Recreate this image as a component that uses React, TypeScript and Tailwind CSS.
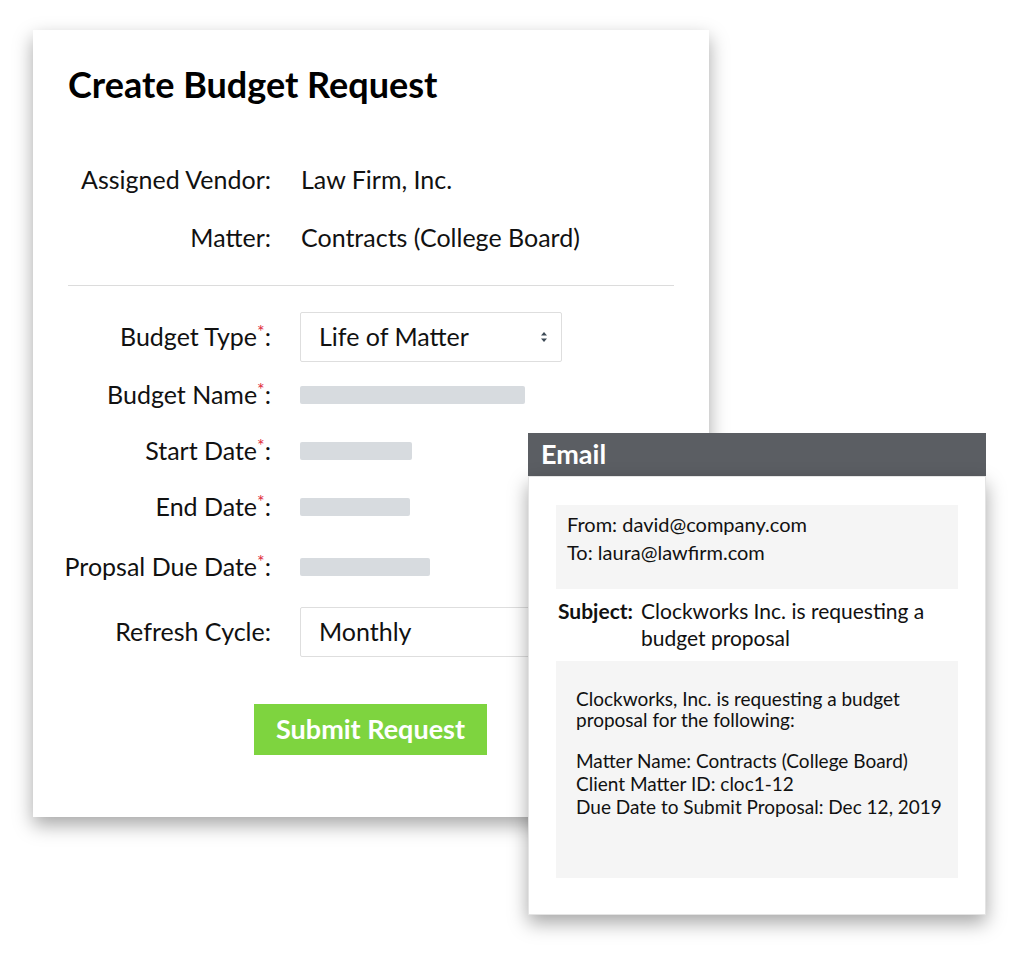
import React from "react";

const font = { fontFamily: "Lato, 'Open Sans', sans-serif" };

function Req() {
  return <span className="text-[#e0283a] text-[18px] relative -top-[8px]">*</span>;
}

function Label({ text, required }: { text: string; required?: boolean }) {
  return (
    <div className="w-[238px] shrink-0 text-right whitespace-nowrap text-[25px] text-[#111]">
      {text}
      {required && <Req />}:
    </div>
  );
}

function Chevrons() {
  return (
    <svg width="10" height="18" viewBox="0 0 10 18" className="shrink-0">
      <path d="M2 7.5 L5 4 L8 7.5 Z" fill="#3d4a56" />
      <path d="M2 10.5 L5 14 L8 10.5 Z" fill="#3d4a56" />
    </svg>
  );
}

function BudgetForm() {
  return (
    <div className="w-[676px] h-[787px] bg-white shadow-[0_8px_18px_rgba(0,0,0,0.35)] flex flex-col">
      <h1 className="pl-[35px] pt-[33px] text-[36px] leading-[43px] font-bold text-black">Create Budget Request</h1>

      <div className="mt-[45px] flex flex-col">
        <div className="h-[58px] flex items-center">
          <Label text="Assigned Vendor" />
          <div className="ml-[30px] text-[25px] text-[#111]">Law Firm, Inc.</div>
        </div>
        <div className="h-[58px] flex items-center">
          <Label text="Matter" />
          <div className="ml-[30px] text-[25px] text-[#111]">Contracts (College Board)</div>
        </div>
      </div>

      <div className="mx-[35px] mt-[18px] h-px bg-[#dcdcdc]" />

      <div className="mt-[26px] flex flex-col">
        <div className="h-[50px] flex items-center">
          <Label text="Budget Type" required />
          <div className="ml-[29px] w-[262px] h-[50px] border border-[#dedede] rounded-[2px] flex items-center justify-between pl-[18px] pr-[12px] text-[25px] text-[#111]">
            Life of Matter
            <Chevrons />
          </div>
        </div>
        <div className="mt-[5px] h-[56px] flex items-center">
          <Label text="Budget Name" required />
          <div className="ml-[29px] w-[225px] h-[18px] rounded-[2px] bg-[#d7dbdf]" />
        </div>
        <div className="h-[56px] flex items-center">
          <Label text="Start Date" required />
          <div className="ml-[29px] w-[112px] h-[18px] rounded-[2px] bg-[#d7dbdf]" />
        </div>
        <div className="h-[56px] flex items-center">
          <Label text="End Date" required />
          <div className="ml-[29px] w-[110px] h-[18px] rounded-[2px] bg-[#d7dbdf]" />
        </div>
        <div className="mt-[2px] h-[60px] flex items-center">
          <Label text="Propsal Due Date" required />
          <div className="ml-[29px] w-[130px] h-[18px] rounded-[2px] bg-[#d7dbdf]" />
        </div>
        <div className="mt-[10px] h-[50px] flex items-center">
          <Label text="Refresh Cycle" />
          <div className="ml-[29px] w-[262px] h-[50px] border border-[#dedede] rounded-[2px] flex items-center pl-[18px] text-[25px] text-[#111]">
            Monthly
          </div>
        </div>
      </div>

      <div className="mt-[47px] flex pl-[221px]">
        <button className="w-[233px] h-[51px] bg-[#7ed43f] text-white text-[27px] font-bold">Submit Request</button>
      </div>
    </div>
  );
}

function EmailCard() {
  return (
    <div className="w-[458px] flex flex-col">
      <div className="h-[43px] bg-[#5b5e63] flex items-center pl-[13px] text-white text-[27px] font-bold">Email</div>
      <div className="h-[439px] bg-white border border-[#e4e4e4] shadow-[0_8px_18px_rgba(0,0,0,0.35)] px-[27px] pt-[28px] flex flex-col">
        <div className="h-[84px] bg-[#f5f5f5] pl-[11px] pt-[5px] text-[20px] leading-[28px] text-[#111]">
          <div>From: david@company.com</div>
          <div>To: laura@lawfirm.com</div>
        </div>
        <div className="mt-[8px] flex text-[21px] leading-[27px] text-[#111] pl-[2px]">
          <span className="font-bold w-[83px] shrink-0">Subject:</span>
          <span>Clockworks Inc. is requesting a budget proposal</span>
        </div>
        <div className="mt-[10px] h-[217px] bg-[#f5f5f5] pl-[20px] pt-[27px] text-[19px] text-[#111]">
          <div className="leading-[21px]">
            Clockworks, Inc. is requesting a budget
            <br />
            proposal for the following:
          </div>
          <div className="mt-[19px] leading-[23px]">
            <div>Matter Name: Contracts (College Board)</div>
            <div>Client Matter ID: cloc1-12</div>
            <div>Due Date to Submit Proposal: Dec 12, 2019</div>
          </div>
        </div>
      </div>
    </div>
  );
}

export default function App() {
  return (
    <div className="relative w-[1024px] h-[960px] bg-white overflow-hidden" style={font}>
      <div className="pl-[33px] pt-[30px]">
        <BudgetForm />
      </div>
      <div className="absolute left-[528px] top-[433px]">
        <EmailCard />
      </div>
    </div>
  );
}
